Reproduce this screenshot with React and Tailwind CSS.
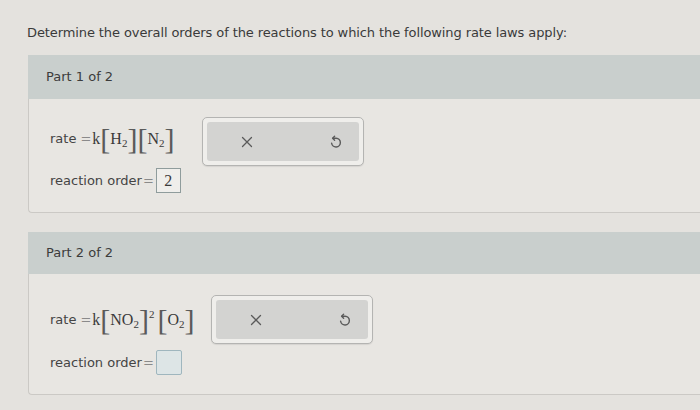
import React from 'react';

const XIcon = () => (
  <svg width="12" height="12" viewBox="0 0 12 12" fill="none" stroke="#5a5a5a" strokeWidth="1.3" strokeLinecap="round">
    <path d="M1.5 1.5l9 9M10.5 1.5l-9 9" />
  </svg>
);

const UndoIcon = () => (
  <svg width="13" height="14" viewBox="0 0 13 14" fill="none" stroke="#5a5a5a" strokeWidth="1.4" strokeLinecap="round" strokeLinejoin="round">
    <path d="M4 3.2h3.2a4.4 4.4 0 1 1 -4.6 5" />
    <path d="M5.6 1.2L3.6 3.2l2 2" />
  </svg>
);

const ActionBox = ({ ml }) => (
  <div className={`${ml} w-[162px] h-[49px] rounded-[5px] border border-[#b4b4b2] bg-[#efeeeb] p-[4px] shadow-[0_1px_1px_rgba(0,0,0,0.08)]`}>
    <div className="h-full rounded-[3px] bg-[#d3d3d1] flex items-center">
      <span className="ml-[34px] flex"><XIcon /></span>
      <span className="ml-[76px] flex"><UndoIcon /></span>
    </div>
  </div>
);

const Bracket = ({ children }) => (
  <span className="inline-flex items-center">
    <span className="font-['Liberation_Serif',serif] text-[30px] leading-none text-[#5a5a5a] font-light">[</span>
    <span>{children}</span>
    <span className="font-['Liberation_Serif',serif] text-[30px] leading-none text-[#5a5a5a] font-light">]</span>
  </span>
);

const Chem = ({ base, sub }) => (
  <span className="font-['Liberation_Serif',serif] text-[16px] text-[#3a3a3a]">
    {base}
    <sub className="text-[11px] relative top-[3px]">{sub}</sub>
  </span>
);

const Part = ({ title, formula, answer, headerH, bodyH, bodyPt, rowGap, boxMl }) => (
  <div>
    <div className={`${headerH} bg-[#c9cfcd] pl-[18px] flex items-center text-[13px] text-[#3c3c3c]`}>
      {title}
    </div>
    <div className={`${bodyH} ${bodyPt} border-l border-b border-[#cbc9c5] rounded-bl-[4px] bg-[#e8e6e2] pl-[21px] flex flex-col ${rowGap}`}>
      <div className="flex items-center">
        {formula}
        <ActionBox ml={boxMl} />
      </div>
      <div className="flex items-center text-[13px] text-[#444]">
        <span>reaction order</span>
        <span className="text-[#8a8a8a] ml-[1px] mr-[2px]">=</span>
        {answer}
      </div>
    </div>
  </div>
);

const App = () => {
  const rate1 = (
    <div className="flex items-center -mt-[6px] whitespace-nowrap">
      <span className="text-[13px] text-[#444] mr-[4px]">rate</span>
      <span className="text-[13px] text-[#8a8a8a] mr-[1px]">=</span>
      <span className="font-['Liberation_Serif',serif] text-[16px] text-[#3a3a3a]">k</span>
      <Bracket><Chem base="H" sub="2" /></Bracket>
      <Bracket><Chem base="N" sub="2" /></Bracket>
    </div>
  );

  const rate2 = (
    <div className="flex items-center whitespace-nowrap">
      <span className="text-[13px] text-[#444] mr-[4px]">rate</span>
      <span className="text-[13px] text-[#8a8a8a] mr-[1px]">=</span>
      <span className="font-['Liberation_Serif',serif] text-[16px] text-[#3a3a3a]">k</span>
      <Bracket><Chem base="NO" sub="2" /></Bracket>
      <sup className="font-['Liberation_Serif',serif] text-[11px] text-[#3a3a3a] relative -top-[6px] mr-[3px]">2</sup>
      <Bracket><Chem base="O" sub="2" /></Bracket>
    </div>
  );

  return (
    <div className="w-[700px] h-[410px] overflow-hidden bg-[#e4e2de] font-['DejaVu_Sans',sans-serif] text-[#3a3a3a]">
      <p className="pt-[24px] pl-[27px] text-[13px] leading-[18px] tracking-[-0.1px]">
        Determine the overall orders of the reactions to which the following rate laws apply:
      </p>
      <div className="mt-[13px] ml-[28px] flex flex-col gap-[19px]">
        <Part
          title="Part 1 of 2"
          headerH="h-[44px]"
          bodyH="h-[114px]"
          bodyPt="pt-[18px]"
          rowGap="gap-[2px]"
          boxMl="ml-[28px]"
          formula={rate1}
          answer={
            <span className="w-[25px] h-[25px] border border-[#8f9c9c] bg-[#efeeeb] flex items-center justify-center font-['Liberation_Serif',serif] text-[16px] text-[#3a3a3a]">
              2
            </span>
          }
        />
        <Part
          title="Part 2 of 2"
          headerH="h-[42px]"
          bodyH="h-[121px]"
          bodyPt="pt-[21px]"
          rowGap="gap-[6px]"
          boxMl="ml-[17px]"
          formula={rate2}
          answer={<span className="w-[26px] h-[25px] border border-[#9fb6be] bg-[#dde5e6] rounded-[2px]" />}
        />
      </div>
    </div>
  );
};

export default App;
